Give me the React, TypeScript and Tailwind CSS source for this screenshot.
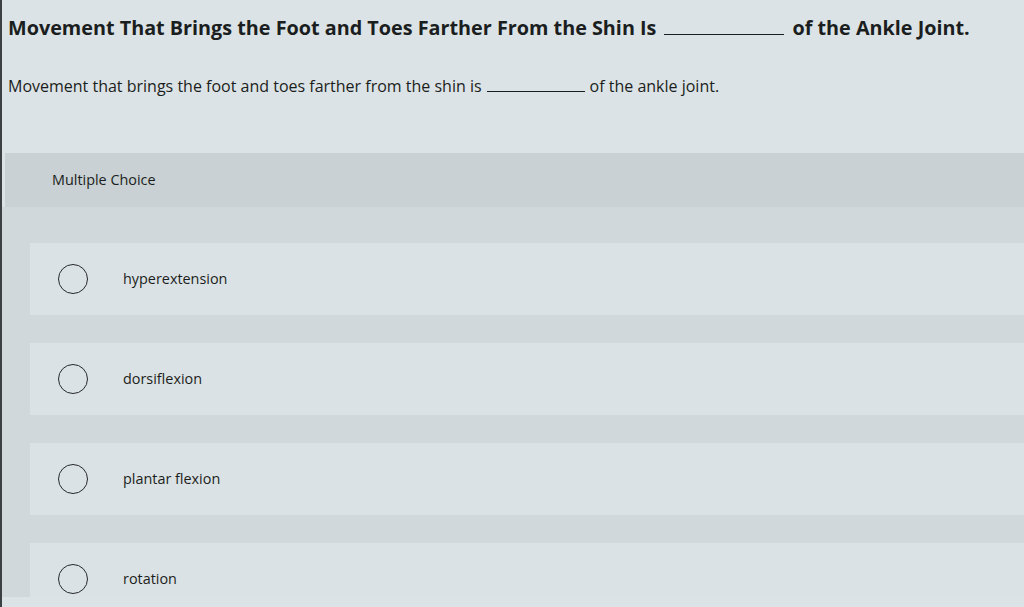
import React from "react";

const options = ["hyperextension", "dorsiflexion", "plantar flexion", "rotation"];

function Radio() {
  return <div className="w-[30px] h-[30px] rounded-full border-[1.5px] border-[#26292b] shrink-0" />;
}

export default function App() {
  return (
    <div
      className="w-[1024px] h-[607px] overflow-hidden bg-[#dce3e6] border-l-2 border-[#3b4043] text-[#1b1e20] flex flex-col"
      style={{ fontFamily: "'Open Sans', Lato, sans-serif" }}
    >
      <div className="mt-[16px] pl-[6px] text-[19.8px] leading-[24px] font-bold whitespace-nowrap">
        Movement That Brings the Foot and Toes Farther From the Shin Is
        <span className="inline-block w-[120px] border-b-[1.5px] border-[#1b1e20] align-baseline mx-[8px]" />
        of the Ankle Joint.
      </div>
      <div className="mt-[36px] pl-[6px] text-[16px] leading-[20px] whitespace-nowrap">
        Movement that brings the foot and toes farther from the shin is
        <span className="inline-block w-[98px] border-b border-[#1b1e20] mx-[5px]" />
        of the ankle joint.
      </div>
      <div className="mt-[57px] ml-[3px] h-[54px] shrink-0 bg-[#c9d1d4] flex items-center pl-[47px] text-[14.4px]">
        Multiple Choice
      </div>
      <div className="h-[390px] shrink-0 overflow-hidden bg-[#d0d8db] pt-[36px] pl-[28px] flex flex-col gap-[28px]">
        {options.map((o) => (
          <div key={o} className="h-[72px] shrink-0 bg-[#dbe2e5] flex items-center pl-[28px] gap-[35px] text-[14.4px]">
            <Radio />
            <span>{o}</span>
          </div>
        ))}
      </div>
    </div>
  );
}
